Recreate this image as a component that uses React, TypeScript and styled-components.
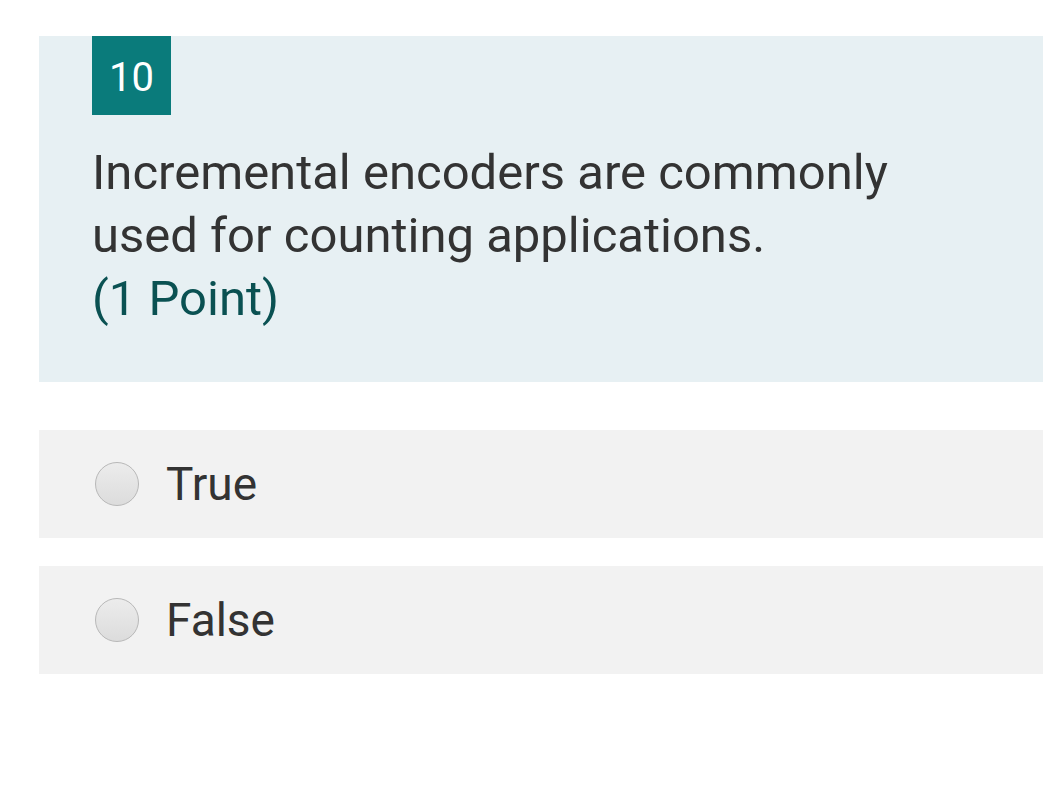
import React from "react";
import styled, { createGlobalStyle } from "styled-components";

const Global = createGlobalStyle`
  html, body { margin: 0; padding: 0; background: #ffffff; }
  body { font-family: Roboto, "Noto Sans", sans-serif; }
`;

const Page = styled.div`
  padding: 36px 11px 0 39px;
  display: flex;
  flex-direction: column;
`;

const QuestionPanel = styled.section`
  background: #e7f0f3;
  padding: 0 53px 0 53px;
  height: 346px;
  box-sizing: border-box;
  display: flex;
  flex-direction: column;
  align-items: flex-start;
`;

const Badge = styled.div`
  width: 79px;
  height: 79px;
  padding-top: 3px;
  box-sizing: border-box;
  background: #0a7b7b;
  color: #ffffff;
  font-size: 40px;
  display: flex;
  align-items: center;
  justify-content: center;
`;

const QuestionText = styled.div`
  margin-top: 26px;
  font-size: 49px;
  line-height: 63px;
  color: #333333;
`;

const Points = styled.div`
  color: #0a5152;
`;

const Options = styled.div`
  margin-top: 48px;
  display: flex;
  flex-direction: column;
  gap: 28px;
`;

const Option = styled.label`
  background: #f2f2f2;
  height: 108px;
  display: flex;
  align-items: center;
  padding-left: 56px;
  gap: 27px;
  box-sizing: border-box;
`;

const Radio = styled.span`
  width: 44px;
  height: 44px;
  border-radius: 50%;
  border: 1px solid #b8b8b8;
  background: linear-gradient(180deg, #ececec 0%, #dcdcdc 100%);
  box-sizing: border-box;
  flex: none;
`;

const OptionText = styled.span`
  font-size: 46px;
  color: #333333;
`;

export default function App() {
  return (
    <>
      <Global />
      <Page>
        <QuestionPanel>
          <Badge>10</Badge>
          <QuestionText>
            Incremental encoders are commonly
            <br />
            used for counting applications.
            <Points>(1 Point)</Points>
          </QuestionText>
        </QuestionPanel>
        <Options>
          <Option>
            <Radio />
            <OptionText>True</OptionText>
          </Option>
          <Option>
            <Radio />
            <OptionText>False</OptionText>
          </Option>
        </Options>
      </Page>
    </>
  );
}
